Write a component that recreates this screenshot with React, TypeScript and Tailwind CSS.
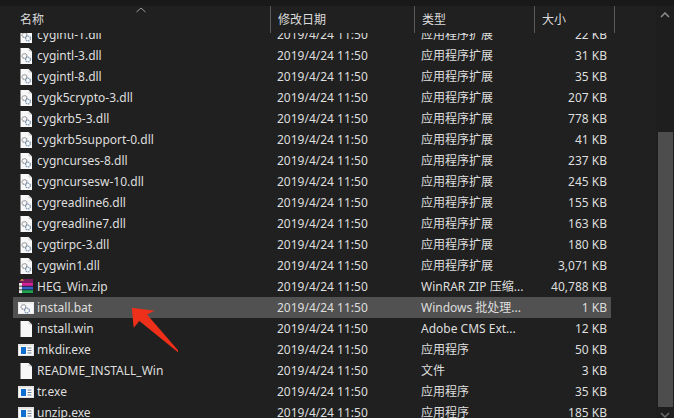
const rows: [string, string, string, string, string][] = [
  ["dll", "cygintl-1.dll", "2019/4/24 11:50", "应用程序扩展", "22 KB"],
  ["dll", "cygintl-3.dll", "2019/4/24 11:50", "应用程序扩展", "31 KB"],
  ["dll", "cygintl-8.dll", "2019/4/24 11:50", "应用程序扩展", "35 KB"],
  ["dll", "cygk5crypto-3.dll", "2019/4/24 11:50", "应用程序扩展", "207 KB"],
  ["dll", "cygkrb5-3.dll", "2019/4/24 11:50", "应用程序扩展", "778 KB"],
  ["dll", "cygkrb5support-0.dll", "2019/4/24 11:50", "应用程序扩展", "41 KB"],
  ["dll", "cygncurses-8.dll", "2019/4/24 11:50", "应用程序扩展", "237 KB"],
  ["dll", "cygncursesw-10.dll", "2019/4/24 11:50", "应用程序扩展", "245 KB"],
  ["dll", "cygreadline6.dll", "2019/4/24 11:50", "应用程序扩展", "155 KB"],
  ["dll", "cygreadline7.dll", "2019/4/24 11:50", "应用程序扩展", "163 KB"],
  ["dll", "cygtirpc-3.dll", "2019/4/24 11:50", "应用程序扩展", "180 KB"],
  ["dll", "cygwin1.dll", "2019/4/24 11:50", "应用程序扩展", "3,071 KB"],
  ["zip", "HEG_Win.zip", "2019/4/24 11:50", "WinRAR ZIP 压缩...", "40,788 KB"],
  ["bat", "install.bat", "2019/4/24 11:50", "Windows 批处理...", "1 KB"],
  ["file", "install.win", "2019/4/24 11:50", "Adobe CMS Ext...", "12 KB"],
  ["exe", "mkdir.exe", "2019/4/24 11:50", "应用程序", "50 KB"],
  ["file", "README_INSTALL_Win", "2019/4/24 11:50", "文件", "3 KB"],
  ["exe", "tr.exe", "2019/4/24 11:50", "应用程序", "35 KB"],
  ["exe", "unzip.exe", "2019/4/24 11:50", "应用程序", "185 KB"],
];

function Gears({ x, y }: { x: number; y: number }) {
  return (
    <g transform={`translate(${x} ${y})`} fill="none">
      <circle cx="3" cy="3" r="2.4" stroke="#8a8f96" strokeWidth="1.3" strokeDasharray="1.4 0.6" />
      <circle cx="6.5" cy="6.5" r="2.4" stroke="#7d97b5" strokeWidth="1.3" strokeDasharray="1.4 0.6" />
    </g>
  );
}

function Page({ gears }: { gears?: boolean }) {
  return (
    <svg width="16" height="18" viewBox="0 0 16 18" className="block">
      <path d="M2.5 1H10.5L14 4.5V17H2.5Z" fill="#f8f8f8" />
      <path d="M10.5 1V4.5H14" fill="#d8d8d8" />
      {gears && <Gears x={3.5} y={6} />}
    </svg>
  );
}

function Icon({ kind }: { kind: string }) {
  if (kind === "dll") return <Page gears />;
  if (kind === "file") return <Page />;
  if (kind === "bat")
    return (
      <svg width="16" height="18" viewBox="0 0 16 18" className="block">
        <rect x="0" y="3" width="16" height="12" fill="#ececec" />
        <rect x="1" y="5" width="14" height="9" fill="#f8f8f8" />
        <Gears x={2.5} y={5} />
      </svg>
    );
  if (kind === "exe")
    return (
      <svg width="16" height="18" viewBox="0 0 16 18" className="block">
        <rect x="0" y="3" width="16" height="12" fill="#e4e4e4" />
        <rect x="1" y="5" width="14" height="9" fill="#fafafa" />
        <rect x="3" y="6" width="5" height="7" fill="#0f6fd1" />
        <rect x="9.5" y="6.5" width="4" height="1" fill="#6f7f90" />
        <rect x="9.5" y="9" width="4" height="1" fill="#6f7f90" />
        <rect x="9.5" y="11.5" width="4" height="1" fill="#6f7f90" />
      </svg>
    );
  return (
    <svg width="16" height="18" viewBox="0 0 16 18" className="block">
      <path d="M1 3 L5 1 H15 V5 H4Z" fill="#7a1d5e" />
      <path d="M2 2.5H6L4 1Z" fill="#e8c93a" />
      <rect x="1" y="5" width="14" height="3.5" fill="#d6229a" />
      <rect x="1" y="8.5" width="14" height="3.5" fill="#3060c8" />
      <rect x="1" y="12" width="14" height="3.5" fill="#20a050" />
      <rect x="1" y="5" width="3" height="10.5" fill="#e4e4e4" />
      <rect x="1" y="7.8" width="14" height="0.7" fill="#111" />
      <rect x="1" y="11.5" width="14" height="0.7" fill="#111" />
      <rect x="1" y="15" width="14" height="0.8" fill="#111" />
    </svg>
  );
}

function Head({ label, className }: { label: string; className: string }) {
  return (
    <div className={`flex h-[27px] items-center border-r border-[#5a5a5a] pl-[7px] text-[#dcdcdc] ${className}`}>
      {label}
    </div>
  );
}

export default function App() {
  return (
    <div
      className="flex h-[418px] w-[674px] flex-col overflow-hidden bg-[#202020] text-[12px] text-[#dedede]"
      style={{ fontFamily: '"Noto Sans", "Noto Sans CJK SC", sans-serif' }}
    >
      <div className="h-[6px] shrink-0 bg-[#191919]" />
      <div className="relative flex min-h-0 flex-1">
        <div className="relative w-[656px] min-w-0">
          <div className="flex h-[27px] pl-[13px]">
            <Head label="名称" className="relative w-[258px] pl-[3px]" />
            <Head label="修改日期" className="w-[144px]" />
            <Head label="类型" className="w-[120px]" />
            <Head label="大小" className="w-[80px]" />
            <svg width="12" height="6" viewBox="0 0 12 6" className="absolute left-[135px] top-[1px]">
              <path d="M1.5 5 L6 1 L10.5 5" fill="none" stroke="#9a9a9a" strokeWidth="1" />
            </svg>
          </div>
          <div className="h-[385px] overflow-hidden">
            <div className="-mt-[9px] pl-[13px]">
              {rows.map(([kind, name, date, type, size]) => (
                <div
                  key={name}
                  className={`grid h-[21px] w-[598px] grid-cols-[257px_144px_120px_77px] items-center ${kind === "bat" ? "bg-[#515151]" : ""}`}
                >
                  <div className="flex items-center whitespace-nowrap">
                    <span className="ml-[5px] mr-[3px] shrink-0">
                      <Icon kind={kind} />
                    </span>
                    {name}
                  </div>
                  <div className="whitespace-nowrap pl-[7px]">{date}</div>
                  <div className="whitespace-nowrap pl-[7px]">{type}</div>
                  <div className="whitespace-nowrap pr-[4px] text-right">{size}</div>
                </div>
              ))}
            </div>
          </div>
          <svg width="50" height="66" viewBox="0 0 50 66" className="absolute left-[128px] top-[298px]">
            <path d="M4 4 L6 25 L12 18 L59 56 L20 11 L28 7 Z" fill="#ee2f1a" transform="translate(0 0) scale(0.95)" />
          </svg>
        </div>
        <div className="flex w-[18px] shrink-0 flex-col items-center bg-[#1e1e1e]">
          <svg width="10" height="6" viewBox="0 0 10 6" className="mt-[6px] shrink-0">
            <path d="M1 5 L5 1 L9 5" fill="none" stroke="#8a8a8a" strokeWidth="1.6" />
          </svg>
          <div className="ml-[1px] mt-[114px] h-[275px] w-[15px] shrink-0 bg-[#4d4d4d]" />
          <svg width="10" height="6" viewBox="0 0 10 6" className="mt-[5px] shrink-0">
            <path d="M1 1 L5 5 L9 1" fill="none" stroke="#6a6a6a" strokeWidth="1.6" />
          </svg>
        </div>
      </div>
    </div>
  );
}
